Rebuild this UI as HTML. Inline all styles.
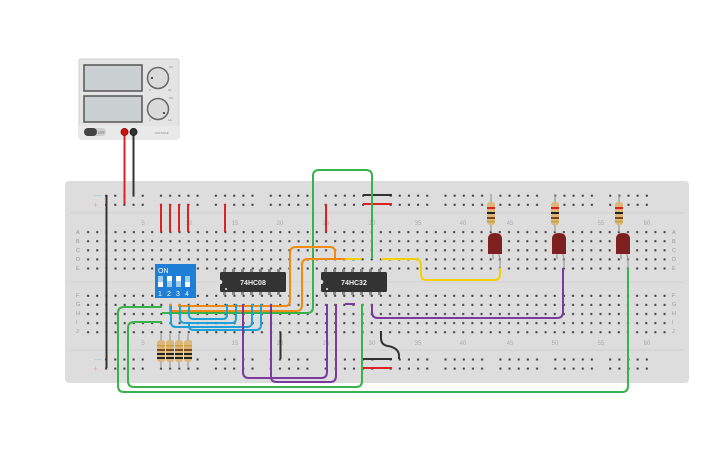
<!DOCTYPE html>
<html><head><style>
html,body{margin:0;padding:0;background:#fff;width:725px;height:453px;overflow:hidden}
svg{display:block}
text{font-family:"Liberation Sans",sans-serif}
</style></head><body>
<svg width="725" height="453" viewBox="0 0 725 453" xmlns="http://www.w3.org/2000/svg">
<defs>
<pattern id="row" x="83.5" y="0" width="9.15" height="9.1" patternUnits="userSpaceOnUse">
<rect x="3.6" y="3.6" width="2" height="2" fill="#3a3a3a"/>
</pattern>
<pattern id="rail" x="101.5" y="0" width="54.9" height="9.1" patternUnits="userSpaceOnUse">
<g fill="#3a3a3a"><rect x="3.6" y="3.6" width="2" height="2"/><rect x="12.75" y="3.6" width="2" height="2"/><rect x="21.9" y="3.6" width="2" height="2"/><rect x="31.05" y="3.6" width="2" height="2"/><rect x="40.2" y="3.6" width="2" height="2"/></g>
</pattern>
</defs>
<!-- breadboard -->
<rect x="65" y="181" width="624" height="202" rx="4" fill="#dddddd"/>
<line x1="70" y1="213" x2="684" y2="213" stroke="#d0d0d0"/>
<line x1="70" y1="350" x2="684" y2="350" stroke="#d0d0d0"/>
<line x1="70" y1="282" x2="684" y2="282" stroke="#d4d4d4"/>
<!-- rails -->
<rect x="101.5" y="190.5" width="230" height="9.1" fill="url(#rail)" transform="translate(0,0)"/>
<rect x="101.5" y="199.6" width="230" height="9.1" fill="url(#rail)"/>
<rect x="101.5" y="354.5" width="230" height="9.1" fill="url(#rail)"/>
<rect x="101.5" y="363.6" width="230" height="9.1" fill="url(#rail)"/>
<g transform="translate(10,0)">
<rect x="321.5" y="190.5" width="330" height="9.1" fill="url(#rail)"/>
<rect x="321.5" y="199.6" width="330" height="9.1" fill="url(#rail)"/>
<rect x="321.5" y="354.5" width="330" height="9.1" fill="url(#rail)"/>
<rect x="321.5" y="363.6" width="330" height="9.1" fill="url(#rail)"/>
</g>
<text x="94" y="198" font-size="8" fill="#9fc3de">—</text>
<text x="93" y="208" font-size="9" fill="#f3a3a3">+</text>
<text x="94" y="362" font-size="8" fill="#9fc3de">—</text>
<text x="93" y="372" font-size="9" fill="#f3a3a3">+</text>
<!-- main rows -->
<rect x="83.5" y="227.5" width="586" height="45.5" fill="url(#row)"/>
<rect x="83.5" y="290.5" width="586" height="45.5" fill="url(#row)"/>
<g font-size="5.5" fill="#999">
<text x="76" y="234">A</text><text x="76" y="243">B</text><text x="76" y="252">C</text><text x="76" y="261">D</text><text x="76" y="270">E</text>
<text x="76" y="297">F</text><text x="76" y="306">G</text><text x="76" y="315">H</text><text x="76" y="324">I</text><text x="76" y="333">J</text>
<text x="672" y="234">A</text><text x="672" y="243">B</text><text x="672" y="252">C</text><text x="672" y="261">D</text><text x="672" y="270">E</text>
<text x="672" y="297">F</text><text x="672" y="306">G</text><text x="672" y="315">H</text><text x="672" y="324">I</text><text x="672" y="333">J</text>
</g>
<g font-size="6" fill="#aaa" text-anchor="middle">
<text x="143" y="225">5</text><text x="189" y="225">10</text><text x="235" y="225">15</text><text x="280" y="225">20</text><text x="326" y="225">25</text><text x="372" y="225">30</text><text x="418" y="225">35</text><text x="463" y="225">40</text><text x="510" y="225">45</text><text x="555" y="225">50</text><text x="601" y="225">55</text><text x="647" y="225">60</text>
<text x="143" y="345">5</text><text x="189" y="345">10</text><text x="235" y="345">15</text><text x="280" y="345">20</text><text x="326" y="345">25</text><text x="372" y="345">30</text><text x="418" y="345">35</text><text x="463" y="345">40</text><text x="510" y="345">45</text><text x="555" y="345">50</text><text x="601" y="345">55</text><text x="647" y="345">60</text>
</g>
<!-- power supply -->
<rect x="79" y="59" width="100" height="80" rx="2" fill="#e4e4e4" stroke="#d0d0d0"/>
<rect x="79" y="126" width="100" height="13" fill="#e9e9e9"/>
<rect x="84" y="65" width="58" height="26" fill="#cbd1d3" stroke="#555" stroke-width="1.5"/>
<rect x="84" y="96" width="58" height="26" fill="#cbd1d3" stroke="#555" stroke-width="1.5"/>
<circle cx="158" cy="78" r="10.5" fill="#dadada" stroke="#666" stroke-width="1.5"/>
<circle cx="158" cy="109" r="10.5" fill="#dadada" stroke="#666" stroke-width="1.5"/>
<circle cx="152" cy="78" r="1" fill="#222"/><circle cx="164" cy="113" r="1" fill="#222"/>
<g font-size="3" fill="#888"><text x="169" y="68">CV</text><text x="169" y="99">CC</text><text x="149" y="91">0</text><text x="168" y="91">30</text><text x="149" y="121">0</text><text x="168" y="121">1A</text><text x="155" y="134">VOLTAGE</text></g>
<rect x="84" y="128" width="22" height="8" rx="4" fill="#cfcfcf"/>
<rect x="84" y="128" width="13" height="8" rx="4" fill="#444"/>
<text x="98" y="134" font-size="3.5" fill="#666">OFF</text>
<!-- power wires -->
<line x1="124.5" y1="132" x2="124.5" y2="204" stroke="#d22" stroke-width="2"/>
<line x1="133.5" y1="132" x2="133.5" y2="195" stroke="#333" stroke-width="2"/>
<circle cx="124.5" cy="132" r="3.6" fill="#c11" stroke="#800" stroke-width=".7"/>
<circle cx="133.5" cy="132" r="3.6" fill="#333" stroke="#111" stroke-width=".7"/>
<line x1="106.5" y1="195" x2="106.5" y2="368" stroke="#333" stroke-width="2"/>
<!-- red jumpers -->
<g stroke="#d22" stroke-width="2">
<line x1="161" y1="204" x2="161" y2="232"/><line x1="170" y1="204" x2="170" y2="232"/><line x1="179" y1="204" x2="179" y2="232"/><line x1="188" y1="204" x2="188" y2="232"/>
<line x1="225" y1="204" x2="225" y2="232"/><line x1="326" y1="204" x2="326" y2="232"/>
<line x1="363" y1="204" x2="392" y2="204"/><line x1="363" y1="368" x2="392" y2="368"/>
</g>
<g stroke="#333" stroke-width="2" fill="none">
<line x1="363" y1="195" x2="392" y2="195"/><line x1="363" y1="359" x2="392" y2="359"/>
<line x1="280.5" y1="332" x2="280.5" y2="359"/>
<path d="M381,331 V338 Q381,345 388,346 Q399,348 399,356 V359"/>
</g>
<!-- green -->
<g stroke="#3ab24a" stroke-width="2" fill="none" stroke-linejoin="round">
<path d="M372,259 V176 Q372,170 366,170 H319 Q313,170 313,176 V307 Q313,313 307,313 H162"/>
<path d="M162,307 H124 Q118,307 118,313 V386 Q118,392 124,392 H622 Q628,392 628,386 V268"/>
<path d="M162,322 H134 Q128,322 128,328 V381 Q128,387 134,387 H356 Q362,387 362,381 V304"/>
</g>
<!-- orange -->
<g stroke="#f08a10" stroke-width="2" fill="none" stroke-linejoin="round">
<path d="M179,304 V306 H285 Q290,306 290,300 V253 Q290,247 296,247 H330 Q335,247 335,252 V259"/>
<path d="M170,304 V311 H296 Q302,311 302,305 V265 Q302,259 308,259 H350"/>
</g>
<!-- blue -->
<g stroke="#1ea0d8" stroke-width="2" fill="none" stroke-linejoin="round">
<path d="M189,306 V315 Q189,319 194,319 H223 Q227,319 227,314 V304"/>
<path d="M180,306 V318 Q180,323 185,323 H232 Q236,323 236,318 V304"/>
<path d="M171,306 V322 Q171,327 176,327 H247 Q252,327 252,322 V304"/>
<path d="M189,322 V326 Q189,330 194,330 H256 Q261,330 261,325 V304"/>
</g>
<!-- purple -->
<g stroke="#7a3a9e" stroke-width="2" fill="none" stroke-linejoin="round">
<path d="M243,304 V372 Q243,378 249,378 H321 Q327,378 327,372 V304"/>
<path d="M271,304 V377 Q271,382 277,382 H330 Q336,382 336,376 V304"/>
<path d="M345,304 H355"/>
<path d="M372,304 V312 Q372,318 378,318 H557 Q563,318 563,312 V268"/>
</g>
<!-- yellow -->
<g stroke="#f5d000" stroke-width="2" fill="none" stroke-linejoin="round">
<path d="M345,259 H361"/>
<path d="M381,259 H415 Q421,259 421,265 V274 Q421,280 427,280 H494 Q500,280 500,274 V268"/>
</g>
<!-- DIP switch -->
<rect x="155" y="264" width="41" height="34" fill="#1f7fd6"/>
<text x="158" y="273" font-size="7" fill="#fff">ON</text>
<g fill="#9fcdf0"><rect x="158" y="276" width="5" height="11"/><rect x="167" y="276" width="5" height="11"/><rect x="176" y="276" width="5" height="11"/><rect x="185" y="276" width="5" height="11"/></g>
<g fill="#fff"><rect x="158" y="282" width="5" height="5"/><rect x="167" y="276" width="5" height="5"/><rect x="176" y="276" width="5" height="5"/><rect x="185" y="282" width="5" height="5"/></g>
<g font-size="7" fill="#fff"><text x="158" y="296">1</text><text x="167" y="296">2</text><text x="176" y="296">3</text><text x="185" y="296">4</text></g>
<!-- chips -->
<g fill="#888">
<rect x="223" y="269" width="3" height="3"/><rect x="232" y="269" width="3" height="3"/><rect x="241" y="269" width="3" height="3"/><rect x="250" y="269" width="3" height="3"/><rect x="259" y="269" width="3" height="3"/><rect x="268" y="269" width="3" height="3"/><rect x="277" y="269" width="3" height="3"/>
<rect x="223" y="292" width="3" height="3"/><rect x="232" y="292" width="3" height="3"/><rect x="241" y="292" width="3" height="3"/><rect x="250" y="292" width="3" height="3"/><rect x="259" y="292" width="3" height="3"/><rect x="268" y="292" width="3" height="3"/><rect x="277" y="292" width="3" height="3"/>
<rect x="324" y="269" width="3" height="3"/><rect x="333" y="269" width="3" height="3"/><rect x="342" y="269" width="3" height="3"/><rect x="351" y="269" width="3" height="3"/><rect x="360" y="269" width="3" height="3"/><rect x="369" y="269" width="3" height="3"/><rect x="378" y="269" width="3" height="3"/>
<rect x="324" y="292" width="3" height="3"/><rect x="333" y="292" width="3" height="3"/><rect x="342" y="292" width="3" height="3"/><rect x="351" y="292" width="3" height="3"/><rect x="360" y="292" width="3" height="3"/><rect x="369" y="292" width="3" height="3"/><rect x="378" y="292" width="3" height="3"/>
</g>
<rect x="220" y="272" width="66" height="20" rx="1.5" fill="#333"/>
<rect x="321" y="272" width="66" height="20" rx="1.5" fill="#333"/>
<circle cx="220" cy="282" r="2.3" fill="#dddddd"/><circle cx="321" cy="282" r="2.3" fill="#dddddd"/>
<circle cx="226" cy="289" r="1" fill="#eee"/><circle cx="327" cy="289" r="1" fill="#eee"/>
<text x="253" y="285" font-size="7" fill="#eee" text-anchor="middle" font-family="Liberation Mono,monospace" font-weight="bold">74HC08</text>
<text x="354" y="285" font-size="7" fill="#eee" text-anchor="middle" font-family="Liberation Mono,monospace" font-weight="bold">74HC32</text>
<!-- LEDs + resistors -->
<g id="led">
<line x1="491" y1="194" x2="491" y2="232" stroke="#999" stroke-width="1.2"/>
<rect x="487" y="202" width="8" height="23" rx="3" fill="#dcb77a"/>
<rect x="487" y="207" width="8" height="2" fill="#e02020"/>
<rect x="487" y="212" width="8" height="2" fill="#222"/>
<rect x="487" y="217" width="8" height="2" fill="#7a4a1a"/>
<rect x="487" y="221" width="8" height="1.5" fill="#c9a040"/>
<path d="M493,252 V259 M498,252 L500,258 V268" stroke="#999" stroke-width="1.2" fill="none"/>
<path d="M488,254 V239 Q488,233 495,233 Q502,233 502,239 V254 Z" fill="#7c2020"/>
</g>
<use href="#led" transform="translate(64,0)"/>
<use href="#led" transform="translate(128,0)"/>
<!-- bottom resistors -->
<g id="br">
<line x1="161" y1="334" x2="161" y2="368" stroke="#999" stroke-width="1.2"/>
<rect x="157" y="340" width="8" height="22" rx="3" fill="#dcb77a"/>
<rect x="157" y="345" width="8" height="1.5" fill="#c9a040"/>
<rect x="157" y="349" width="8" height="2" fill="#7a4a1a"/>
<rect x="157" y="353" width="8" height="2" fill="#222"/>
<rect x="157" y="357" width="8" height="2" fill="#222"/>
</g>
<use href="#br" transform="translate(9,0)"/>
<use href="#br" transform="translate(18,0)"/>
<use href="#br" transform="translate(27,0)"/>
</svg>
</body></html>
